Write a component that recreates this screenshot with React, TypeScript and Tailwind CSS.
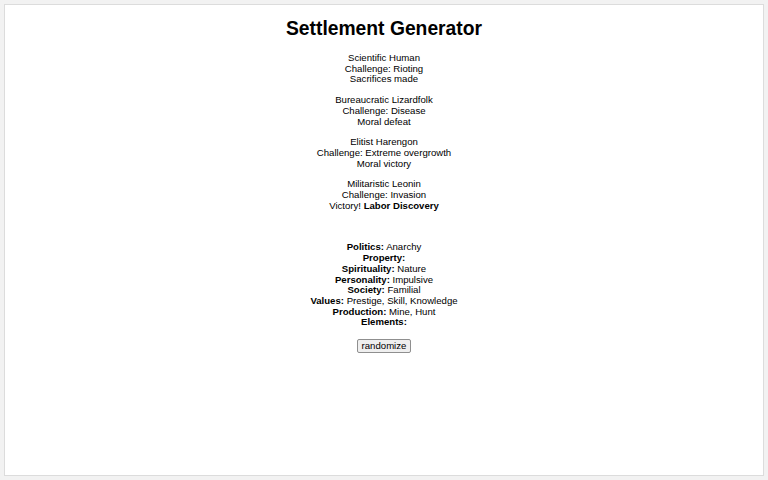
const groups = [
  { title: 'Scientific Human', challenge: 'Rioting', outcome: <>Sacrifices made</> },
  { title: 'Bureaucratic Lizardfolk', challenge: 'Disease', outcome: <>Moral defeat</> },
  { title: 'Elitist Harengon', challenge: 'Extreme overgrowth', outcome: <>Moral victory</> },
  {
    title: 'Militaristic Leonin',
    challenge: 'Invasion',
    outcome: (
      <>
        Victory! <b>Labor Discovery</b>
      </>
    ),
  },
]

const stats: [string, string][] = [
  ['Politics', 'Anarchy'],
  ['Property', ''],
  ['Spirituality', 'Nature'],
  ['Personality', 'Impulsive'],
  ['Society', 'Familial'],
  ['Values', 'Prestige, Skill, Knowledge'],
  ['Production', 'Mine, Hunt'],
  ['Elements', ''],
]

export default function App() {
  return (
    <div className="h-[480px] w-[768px] bg-[#f2f2f2] p-1 font-['Liberation_Sans',Arial,sans-serif] text-black">
      <div className="flex h-full flex-col items-center border border-[#dcdcdc] bg-white pt-[12px] text-center text-[9.6px] leading-[10.7px]">
        <h1 className="text-[19.3px] font-bold leading-[24px]">Settlement Generator</h1>
        <div className="mt-[12px] flex flex-col gap-[10px]">
          {groups.map((g) => (
            <div key={g.title}>
              <div>{g.title}</div>
              <div>Challenge: {g.challenge}</div>
              <div>{g.outcome}</div>
            </div>
          ))}
        </div>
        <div className="mt-[31px]">
          {stats.map(([k, v]) => (
            <div key={k}>
              <b>{k}:</b> {v}
            </div>
          ))}
        </div>
        <button className="mt-[11px] rounded-[2px] border border-[#8f8f8f] bg-[#efefef] px-[4px] text-[9.6px] leading-[12px]">
          randomize
        </button>
      </div>
    </div>
  )
}
